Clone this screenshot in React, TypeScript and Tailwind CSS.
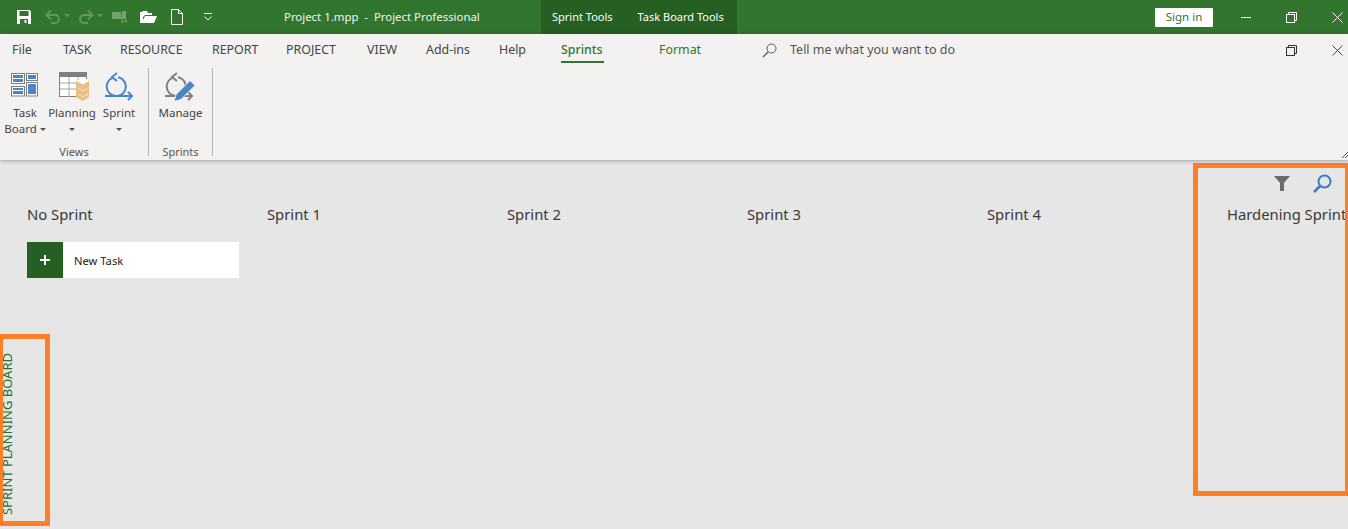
const font = "font-['Noto_Sans','Open_Sans',sans-serif]"

function SaveIcon() {
  return (
    <svg width="16" height="16" viewBox="0 0 16 16">
      <path d="M1 1h12.500L15 2.500V15H1z" fill="#fff" />
      <rect x="3.500" y="2" width="9" height="5" fill="#31752f" />
      <rect x="4" y="10" width="8" height="5" fill="#31752f" />
      <rect x="8.500" y="11" width="2" height="3" fill="#fff" />
    </svg>
  )
}

function UndoIcon({ flip }: { flip?: boolean }) {
  return (
    <svg width="16" height="16" viewBox="0 0 16 16" className={flip ? '-scale-x-100' : ''}>
      <path d="M2 6h8a4 4 0 0 1 0 8H6" fill="none" stroke="#5f9a5c" strokeWidth="2" />
      <path d="M6 1.500 1.500 6 6 10.500" fill="none" stroke="#5f9a5c" strokeWidth="2" />
    </svg>
  )
}

function Caret({ color = '#5f9a5c' }: { color?: string }) {
  return (
    <svg width="6" height="3" viewBox="0 0 6 3">
      <path d="M0 0h6L3 3z" fill={color} />
    </svg>
  )
}

function QuickAccess() {
  return (
    <div className="flex w-[229px] shrink-0 items-center pl-[16px]">
      <SaveIcon />
      <div className="ml-[13px]">
        <UndoIcon />
      </div>
      <div className="ml-[3px] mb-[3px]">
        <Caret />
      </div>
      <div className="ml-[8px]">
        <UndoIcon flip />
      </div>
      <div className="ml-[3px] mb-[3px]">
        <Caret />
      </div>
      <svg width="16" height="14" viewBox="0 0 16 14" className="ml-[9px]">
        <rect x="0" y="2" width="9" height="7" fill="#6fa56c" />
        <rect x="10" y="1" width="4" height="8" fill="#6fa56c" />
        <path d="M10 4v9l2-2 3 1z" fill="none" stroke="#6fa56c" />
      </svg>
      <svg width="17" height="14" viewBox="0 0 17 14" className="ml-[12px]">
        <path d="M0 13V2h2l1-1h4l1 2h4v2H5L3 7v3l2-4h12l-3 7z" fill="#fff" />
      </svg>
      <svg width="12" height="16" viewBox="0 0 12 16" className="ml-[14px]">
        <path d="M.5.5h7l4 4v11H.5z M7.500.5v4h4" fill="none" stroke="#fff" />
      </svg>
      <svg width="8" height="8" viewBox="0 0 8 8" className="ml-[21px]">
        <path d="M0 .5h8" stroke="#fff" />
        <path d="M.5 3.500 4 7l3.500-3.500" fill="none" stroke="#fff" />
      </svg>
    </div>
  )
}

function RestoreIcon({ color }: { color: string }) {
  return (
    <svg width="11" height="11" viewBox="0 0 11 11">
      <path d="M2.500 2.500v-2h8v8h-2" fill="none" stroke={color} />
      <rect x=".5" y="2.500" width="8" height="8" fill="none" stroke={color} />
    </svg>
  )
}

function CloseIcon({ color }: { color: string }) {
  return (
    <svg width="11" height="11" viewBox="0 0 11 11">
      <path d="M.5.5l10 10M10.500.5l-10 10" stroke={color} />
    </svg>
  )
}

function TitleBar() {
  return (
    <div className="flex h-[34px] shrink-0 bg-[#31752f] text-white">
      <QuickAccess />
      <div className="flex w-[312px] shrink-0 items-center pl-[55px] text-[11.4px] text-[#f1f6f0]">
        Project 1.mpp&nbsp; -&nbsp; Project Professional
      </div>
      <div className="flex w-[196px] shrink-0 items-center gap-[25px] bg-[#265f22] pl-[11px] text-[11px]">
        <span>Sprint Tools</span>
        <span>Task Board Tools</span>
      </div>
      <div className="ml-auto flex items-center">
        <div className="flex h-[19px] w-[58px] items-center justify-center rounded-[1px] bg-white text-[11.5px] text-[#31752f]">
          Sign in
        </div>
        <div className="ml-[28px] h-px w-[10px] bg-white" />
        <div className="ml-[35px]">
          <RestoreIcon color="#fff" />
        </div>
        <div className="ml-[35px] mr-[5px]">
          <CloseIcon color="#fff" />
        </div>
      </div>
    </div>
  )
}

const tabs = [
  { label: 'File', width: 'w-[63px] pl-[12px]' },
  { label: 'TASK', width: 'w-[57px]' },
  { label: 'RESOURCE', width: 'w-[92px]' },
  { label: 'REPORT', width: 'w-[74px]' },
  { label: 'PROJECT', width: 'w-[81px]' },
  { label: 'VIEW', width: 'w-[59px]' },
  { label: 'Add-ins', width: 'w-[73px]' },
  { label: 'Help', width: 'w-[62px]' },
]

function TabRow() {
  return (
    <div className="flex h-[32px] shrink-0 items-center text-[12.4px] text-[#444]">
      {tabs.map((t) => (
        <div key={t.label} className={t.width}>
          {t.label}
        </div>
      ))}
      <div className="relative w-[98px] font-medium text-[#31752f]">
        Sprints
        <div className="absolute left-0 top-[20px] h-[2px] w-[43px] bg-[#31752f]" />
      </div>
      <div className="w-[103px] text-[#31752f]">Format</div>
      <svg width="15" height="15" viewBox="0 0 15 15">
        <circle cx="9.500" cy="5.500" r="4.500" fill="none" stroke="#555" />
        <path d="M6 9l-5 5" stroke="#555" strokeWidth="1.300" />
      </svg>
      <div className="ml-[13px] text-[12.5px] text-[#555]">Tell me what you want to do</div>
      <div className="ml-auto flex items-center">
        <RestoreIcon color="#333" />
        <div className="ml-[35px] mr-[5px]">
          <CloseIcon color="#444" />
        </div>
      </div>
    </div>
  )
}

function TaskBoardIcon() {
  return (
    <svg width="28" height="24" viewBox="0 0 28 24" className="mb-[5px]">
      <g fill="#fff" stroke="#7f7f7f">
        <rect x=".5" y=".5" width="13" height="10" />
        <rect x="15.500" y=".5" width="11" height="7" />
        <rect x=".5" y="13.500" width="13" height="9.500" />
        <rect x="15.500" y="9.500" width="11" height="13.500" />
      </g>
      <g fill="#4a86c5">
        <rect x="2" y="2" width="10" height="3" />
        <rect x="2" y="6" width="10" height="3" />
        <rect x="17" y="2" width="8" height="4" />
        <rect x="2" y="15" width="10" height="2" />
        <rect x="2" y="18" width="10" height="3" />
        <rect x="17" y="11" width="8" height="10" />
      </g>
    </svg>
  )
}

function PlanningIcon() {
  return (
    <svg width="31" height="30" viewBox="0 0 31 30" className="ml-[4px]">
      <rect x=".5" y=".5" width="27" height="24" fill="#fff" stroke="#808080" />
      <rect x="0" y="0" width="28" height="5" fill="#7f7f7f" />
      <path d="M1 11h20M1 17h20M10 5v20M19 5v20" stroke="#a6a6a6" />
      <path d="M17 9l7-4 6 4v16l-6 4-7-4z" fill="#e9bf83" />
      <path d="M17 9l7-4 6 4-6 3.500z" fill="#fff" />
      <path d="M19 16l5 3 5-3M19 22l5 3 5-3" fill="none" stroke="#f7e6c9" />
    </svg>
  )
}

function CycleIcon({ color }: { color: string }) {
  return (
    <>
      <path d="M7.500 5.800A9.500 9.500 0 1 0 13 5.200" fill="none" stroke={color} strokeWidth="2" />
      <path d="M12 1 7 5l5 4" fill="none" stroke={color} strokeWidth="2" />
      <path d="M0 24h27" stroke={color} strokeWidth="2" />
      <path d="M23 20l4 4-4 4" fill="none" stroke={color} strokeWidth="2" />
    </>
  )
}

function SprintIcon() {
  return (
    <svg width="29" height="30" viewBox="0 0 29 30">
      <CycleIcon color="#4a86c5" />
    </svg>
  )
}

function ManageIcon() {
  return (
    <svg width="31" height="30" viewBox="0 0 31 30">
      <CycleIcon color="#808080" />
      <path d="M9 29.500l2-7L25 8.500l5 5-14 14z" fill="#4a86c5" stroke="#f3f2f1" />
    </svg>
  )
}

function RibbonButton({
  icon,
  width,
  children,
}: {
  icon: React.ReactNode
  width: string
  children: React.ReactNode
}) {
  return (
    <div className={`flex flex-col items-center ${width}`}>
      <div className="flex h-[34px] items-end">{icon}</div>
      <div className="mt-[3px] flex flex-col items-center text-[11.5px] leading-[16px] text-[#444]">
        {children}
      </div>
    </div>
  )
}

function Ribbon() {
  return (
    <div className="relative flex h-[94px] shrink-0 pt-[2px] pb-[4px]">
      <div className="flex w-[149px] shrink-0 flex-col border-r border-[#b5b5b5]">
        <div className="flex pl-[3px]">
          <RibbonButton icon={<TaskBoardIcon />} width="w-[44px]">
            <span>Task</span>
            <span className="flex items-center gap-[3px]">
              Board
              <Caret color="#555" />
            </span>
          </RibbonButton>
          <RibbonButton icon={<PlanningIcon />} width="w-[50px]">
            <span>Planning</span>
            <span className="flex h-[16px] items-center">
              <Caret color="#555" />
            </span>
          </RibbonButton>
          <RibbonButton icon={<SprintIcon />} width="w-[44px]">
            <span>Sprint</span>
            <span className="flex h-[16px] items-center">
              <Caret color="#555" />
            </span>
          </RibbonButton>
        </div>
        <div className="mt-auto -mb-[3px] text-center text-[11px] leading-[15px] text-[#555]">Views</div>
      </div>
      <div className="flex w-[64px] shrink-0 flex-col border-r border-[#b5b5b5]">
        <RibbonButton icon={<ManageIcon />} width="w-full">
          <span>Manage</span>
        </RibbonButton>
        <div className="mt-auto -mb-[3px] text-center text-[11px] leading-[15px] text-[#555]">Sprints</div>
      </div>
      <svg width="6" height="6" viewBox="0 0 6 6" className="absolute bottom-[2px] right-0">
        <path d="M0 6l6-6M3 6l3-3" stroke="#555" />
      </svg>
    </div>
  )
}

const columns = ['No Sprint', 'Sprint 1', 'Sprint 2', 'Sprint 3', 'Sprint 4', 'Hardening Sprint']

function Board() {
  return (
    <div className="relative min-h-0 flex-1 overflow-hidden bg-[#e6e6e6]">
      <div className="flex h-[33px] items-end justify-end gap-[23px] pr-[16px]">
        <svg width="16" height="15" viewBox="0 0 16 15" className="mb-[2px]">
          <path d="M0 0h16L10 7v8H6V7z" fill="#6b6b6b" />
        </svg>
        <svg width="19" height="19" viewBox="0 0 19 19">
          <circle cx="11.500" cy="7.500" r="6" fill="none" stroke="#3f7cbf" strokeWidth="2" />
          <path d="M7 12l-6 6" stroke="#3f7cbf" strokeWidth="2.500" />
        </svg>
      </div>
      <div className="flex pl-[27px] pt-[10px]">
        {columns.map((name, i) => (
          <div key={name} className="w-[240px] shrink-0">
            <div className="whitespace-nowrap text-[14.8px] leading-[22px] text-[#3a3a3a]">{name}</div>
            {i === 0 && (
              <div className="mt-[17px] flex h-[36px] w-[212px] items-center bg-white">
                <div className="flex h-[36px] w-[36px] items-center justify-center bg-[#265f22]">
                  <svg width="10" height="10" viewBox="0 0 10 10">
                    <path d="M5 0v10M0 5h10" stroke="#fff" strokeWidth="2" />
                  </svg>
                </div>
                <div className="ml-[11px] pt-[2px] text-[11.2px] text-[#222]">New Task</div>
              </div>
            )}
          </div>
        ))}
      </div>

      {/* orange annotation boxes */}
      <div className="absolute left-[1193px] top-[3px] h-[333px] w-[155px] border-[5px] border-r-[3px] border-[#ff7f27]" />
      <div className="absolute left-0 top-[174px] h-[192px] w-[50px] border-[5px] border-l-[3px] border-[#ff7f27]" />

      {/* vertical board label */}
      <div className="absolute bottom-[14px] left-[2px] whitespace-nowrap text-[13px] leading-[11px] text-[#2c6e2a] [writing-mode:vertical-rl] rotate-180">
        SPRINT PLANNING BOARD
      </div>
    </div>
  )
}

export default function App() {
  return (
    <div className={`flex h-[529px] w-[1348px] flex-col overflow-hidden ${font}`}>
      <TitleBar />
      <div className="relative z-10 flex shrink-0 flex-col bg-[#f3f2f1] shadow-[0_1px_4px_rgba(0,0,0,0.3)]">
        <TabRow />
        <Ribbon />
      </div>
      <Board />
    </div>
  )
}
